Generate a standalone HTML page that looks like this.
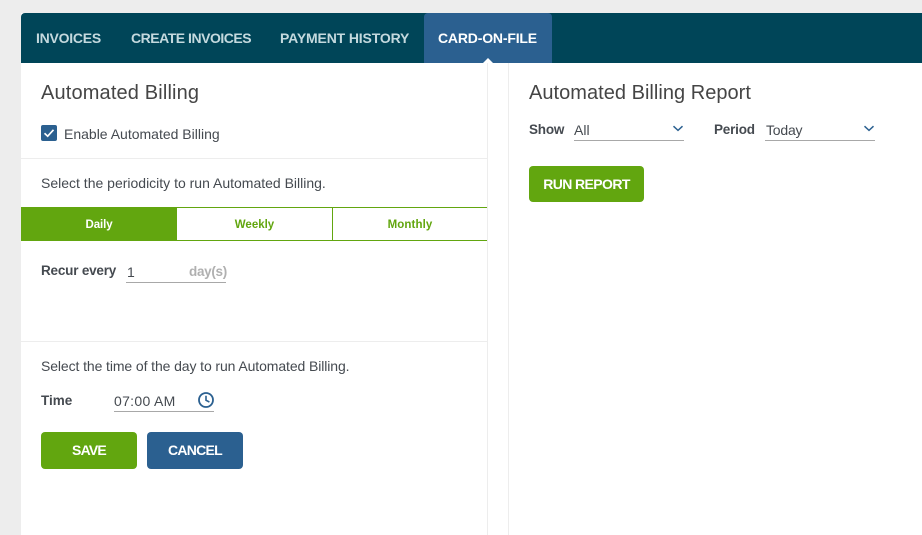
<!DOCTYPE html>
<html><head><meta charset="utf-8">
<style>
html,body{margin:0;padding:0}
body{width:922px;height:535px;background:#ededed;position:relative;overflow:hidden;font-family:"Liberation Sans",sans-serif;color:#43474f}
div,span.a{position:absolute;white-space:nowrap}
.t{line-height:20px;height:20px}
.nav{color:#c4d9de;font-weight:bold;font-size:14px;top:28px}
.h{font-size:20px;line-height:24px;top:81px;color:#454545;letter-spacing:.15px}
.p{font-size:14px;color:#454a50}
.b{font-weight:bold;font-size:13.5px;color:#454a50;letter-spacing:-.2px}
.line{background:#ededed}
.ul{height:1px;background:#a8a8a8}
.btn{border-radius:4px;color:#fff;font-weight:bold;font-size:14px;text-align:center}
.seg{font-size:11.5px;font-weight:bold;text-align:center;line-height:34px;height:32px;color:#62a60f}
</style></head>
<body>
<div style="left:21px;top:13px;width:901px;height:522px;background:#fff"></div>
<div style="left:21px;top:13px;width:901px;height:50px;background:#004558;border-top-left-radius:4px"></div>
<div style="left:424px;top:13px;width:128px;height:50px;background:#2b6090;border-radius:4px 4px 0 0"></div>
<div class="nav t" style="left:36px;letter-spacing:-.25px">INVOICES</div>
<div class="nav t" style="left:131px;letter-spacing:-.48px">CREATE INVOICES</div>
<div class="nav t" style="left:280px;letter-spacing:-.15px">PAYMENT HISTORY</div>
<div class="nav t" style="left:438px;color:#fff;letter-spacing:-.18px">CARD-ON-FILE</div>
<svg style="position:absolute;left:482px;top:58px" width="12" height="6"><path d="M0 6L6 0L12 6Z" fill="#fff"/></svg>

<div class="line" style="left:487px;top:63px;width:1px;height:472px"></div>
<div class="line" style="left:508px;top:63px;width:1px;height:472px"></div>

<div class="h" style="left:41px">Automated Billing</div>
<div style="left:41px;top:125px;width:16px;height:16px;background:#2b6090;border-radius:2px"></div>
<svg style="position:absolute;left:41px;top:125px" width="16" height="16"><path d="M3.5 8.2L6.7 11.2L12.5 4.8" fill="none" stroke="#fff" stroke-width="1.7"/></svg>
<div class="p t" style="left:64px;top:124px">Enable Automated Billing</div>
<div class="line" style="left:21px;top:158px;width:466px;height:1px"></div>
<div class="p t" style="left:41px;top:173px">Select the periodicity to run Automated Billing.</div>

<div style="left:21px;top:207px;width:466px;height:34px;box-sizing:border-box;border-top:1px solid #62a60f;border-bottom:1px solid #62a60f"></div>
<div class="seg" style="left:21px;top:207px;width:156px;height:34px;line-height:36px;background:#62a60f;color:#fff;letter-spacing:-.1px">Daily</div>
<div class="seg" style="left:177px;top:208px;width:155px">Weekly</div>
<div style="left:332px;top:208px;width:1px;height:32px;background:#62a60f"></div>
<div class="seg" style="left:333px;top:208px;width:154px;letter-spacing:.1px">Monthly</div>

<div class="b t" style="left:41px;top:261px">Recur every</div>
<div class="p t" style="left:127px;top:262px">1</div>
<div class="b t" style="left:189px;top:262px;color:#b0b0b0;font-weight:bold;letter-spacing:-.3px">day(s)</div>
<div class="ul" style="left:126px;top:282px;width:100px"></div>

<div class="line" style="left:21px;top:341px;width:466px;height:1px"></div>
<div class="p t" style="left:41px;top:356px;letter-spacing:-.1px">Select the time of the day to run Automated Billing.</div>
<div class="b t" style="left:41px;top:391px;letter-spacing:0">Time</div>
<div class="p t" style="left:114px;top:391px;letter-spacing:.3px">07:00 AM</div>
<div class="ul" style="left:114px;top:411px;width:100px"></div>
<svg style="position:absolute;left:197px;top:391px" width="18" height="18" fill="none" stroke="#2b6090"><circle cx="9" cy="9" r="7" stroke-width="1.8"/><path d="M9 4.8V9.3L12.4 11" stroke-width="1.6"/></svg>

<div class="btn" style="left:41px;top:432px;width:96px;height:37px;line-height:37px;background:#62a60f;letter-spacing:-.8px">SAVE</div>
<div class="btn" style="left:147px;top:432px;width:96px;height:37px;line-height:37px;background:#2b6090;letter-spacing:-.73px">CANCEL</div>

<div class="h" style="left:529px;letter-spacing:.03px">Automated Billing Report</div>
<div class="b t" style="left:529px;top:120px">Show</div>
<div class="p t" style="left:574px;top:120px">All</div>
<div class="ul" style="left:574px;top:140px;width:110px"></div>
<svg style="position:absolute;left:672px;top:124px" width="13" height="9"><path d="M1.5 2.2L6 6.4L10.5 2.2" fill="none" stroke="#2b6090" stroke-width="1.5"/></svg>
<div class="b t" style="left:714px;top:120px">Period</div>
<div class="p t" style="left:766px;top:120px;letter-spacing:-.2px">Today</div>
<div class="ul" style="left:765px;top:140px;width:110px"></div>
<svg style="position:absolute;left:863px;top:124px" width="13" height="9"><path d="M1.5 2.2L6 6.4L10.5 2.2" fill="none" stroke="#2b6090" stroke-width="1.5"/></svg>
<div class="btn" style="left:529px;top:166px;width:115px;height:36px;line-height:36px;background:#62a60f;letter-spacing:-.6px">RUN REPORT</div>
</body></html>
